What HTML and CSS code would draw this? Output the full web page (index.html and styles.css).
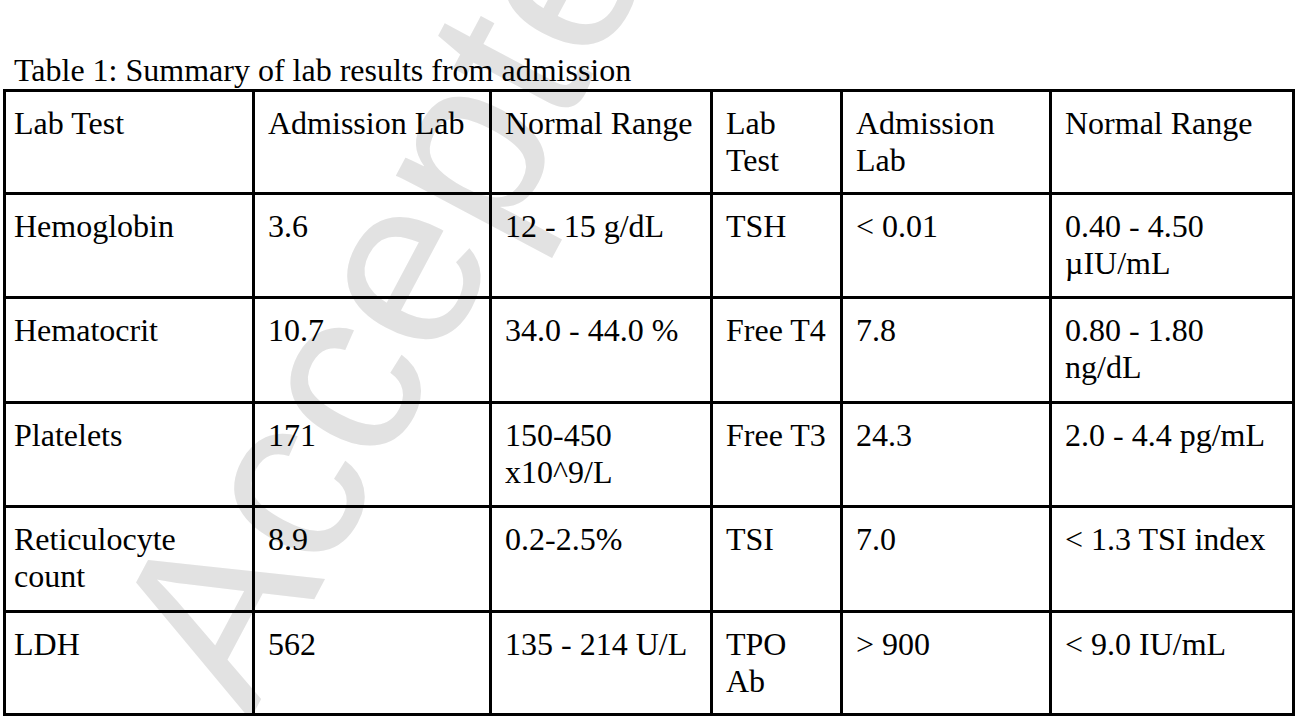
FILE: index.html
```html
<!DOCTYPE html>
<html lang="en">
<head>
<meta charset="utf-8">
<title>Table 1: Summary of lab results from admission</title>
<link rel="stylesheet" href="styles.css">
</head>
<body>
<div class="page">
  <span class="watermark">Accepted</span>
  <div class="caption">Table 1: Summary of lab results from admission</div>
  <div class="labtable">
    <div class="cell first">Lab Test</div>
    <div class="cell">Admission Lab</div>
    <div class="cell">Normal Range</div>
    <div class="cell">Lab Test</div>
    <div class="cell">Admission Lab</div>
    <div class="cell">Normal Range</div>

    <div class="cell first">Hemoglobin</div>
    <div class="cell">3.6</div>
    <div class="cell">12 - 15 g/dL</div>
    <div class="cell">TSH</div>
    <div class="cell">&lt; 0.01</div>
    <div class="cell">0.40 - 4.50 µIU/mL</div>

    <div class="cell first">Hematocrit</div>
    <div class="cell">10.7</div>
    <div class="cell">34.0 - 44.0 %</div>
    <div class="cell">Free T4</div>
    <div class="cell">7.8</div>
    <div class="cell">0.80 - 1.80 ng/dL</div>

    <div class="cell first">Platelets</div>
    <div class="cell">171</div>
    <div class="cell">150-450 x10^9/L</div>
    <div class="cell">Free T3</div>
    <div class="cell">24.3</div>
    <div class="cell">2.0 - 4.4 pg/mL</div>

    <div class="cell first">Reticulocyte count</div>
    <div class="cell">8.9</div>
    <div class="cell">0.2-2.5%</div>
    <div class="cell">TSI</div>
    <div class="cell">7.0</div>
    <div class="cell">&lt; 1.3 TSI index</div>

    <div class="cell first">LDH</div>
    <div class="cell">562</div>
    <div class="cell">135 - 214 U/L</div>
    <div class="cell">TPO Ab</div>
    <div class="cell">&gt; 900</div>
    <div class="cell">&lt; 9.0 IU/mL</div>
  </div>
</div>
</body>
</html>
```

FILE: styles.css
```css
html, body {
  margin: 0;
  padding: 0;
  background: #ffffff;
}

body {
  width: 1296px;
  height: 716px;
  overflow: hidden;
  font-family: "Liberation Serif", "Times New Roman", serif;
  color: #000000;
}

.page {
  position: relative;
  width: 1296px;
  height: 716px;
  overflow: hidden;
}

.watermark {
  position: absolute;
  left: 250px;
  top: 517px;
  display: block;
  font-family: "Liberation Sans", Arial, sans-serif;
  font-size: 240px;
  line-height: 1;
  white-space: nowrap;
  color: #e2e2e2;
  transform-origin: 0 203px;
  transform: rotate(-62deg);
  z-index: 0;
}

.caption {
  position: relative;
  z-index: 1;
  margin-top: 51px;
  height: 38px;
  line-height: 38px;
  padding-left: 14px;
  font-size: 32px;
  white-space: nowrap;
}

.labtable {
  position: relative;
  z-index: 1;
  margin-left: 3px;
  width: 1289px;
  display: grid;
  grid-template-columns: 249px 237px 221px 130px 209px 243px;
  grid-template-rows: 103px 104px 105px 104px 105px 103px;
  border-top: 3px solid #000;
  border-left: 3px solid #000;
}

.cell {
  box-sizing: border-box;
  border-right: 3px solid #000;
  border-bottom: 3px solid #000;
  padding: 13px 12px 0 13px;
  font-size: 32px;
  line-height: 1.15;
  overflow: hidden;
}

.cell.first {
  padding-left: 8px;
}
```
